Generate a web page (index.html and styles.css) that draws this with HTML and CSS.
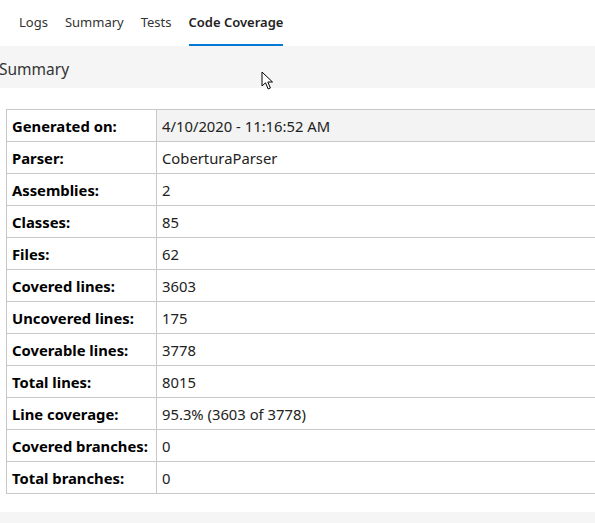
FILE: index.html
```html
<!DOCTYPE html>
<html lang="en">
<head>
  <meta charset="UTF-8">
  <meta name="viewport" content="width=device-width, initial-scale=1.0">
  <link rel="stylesheet" href="styles.css">
  <title>Code Coverage</title>
</head>
<body>

  <div class="tabs">
    <a class="tab">Logs</a>
    <a class="tab">Summary</a>
    <a class="tab">Tests</a>
    <a class="tab active">Code Coverage</a>
  </div>

  <div class="header">
    <h1>Summary</h1>
    <svg class="cursor" width="14" height="20" viewBox="0 0 14 20">
      <path d="M1 1 L1 15 L4.5 11.8 L7.2 18 L9.4 17 L6.8 11 L11.5 11 Z" fill="#fff" stroke="#000" stroke-width="1" stroke-linejoin="miter"/>
    </svg>
  </div>

  <div class="content">
    <table class="overview">
      <tr class="first"><th>Generated on:</th><td>4/10/2020 - 11:16:52 AM</td></tr>
      <tr><th>Parser:</th><td>CoberturaParser</td></tr>
      <tr><th>Assemblies:</th><td>2</td></tr>
      <tr><th>Classes:</th><td>85</td></tr>
      <tr><th>Files:</th><td>62</td></tr>
      <tr><th>Covered lines:</th><td>3603</td></tr>
      <tr><th>Uncovered lines:</th><td>175</td></tr>
      <tr><th>Coverable lines:</th><td>3778</td></tr>
      <tr><th>Total lines:</th><td>8015</td></tr>
      <tr><th>Line coverage:</th><td>95.3% (3603 of 3778)</td></tr>
      <tr><th>Covered branches:</th><td>0</td></tr>
      <tr><th>Total branches:</th><td>0</td></tr>
    </table>
  </div>

  <div class="footer"></div>

</body>
</html>
```

FILE: styles.css
```css
*{
  margin: 0;
  padding: 0;
  box-sizing: border-box;
}
body{
  width: 595px;
  height: 523px;
  overflow: hidden;
  background: #fff;
  font-family: "Noto Sans", "Open Sans", sans-serif;
  color: #222;
}
.tabs{
  display: flex;
  gap: 17px;
  height: 46px;
  padding-left: 19px;
}
.tab{
  font-size: 13px;
  color: #333;
  line-height: 44px;
  border-bottom: 2px solid transparent;
}
.tab.active{
  font-weight: 600;
  color: #222;
  border-bottom-color: #0078d4;
}
.header{
  position: relative;
  background: #f5f5f5;
  height: 42px;
}
.header h1{
  font-size: 15.5px;
  font-weight: normal;
  color: #333;
  line-height: 46px;
  margin-left: -1px;
}
.cursor{
  position: absolute;
  left: 261px;
  top: 25px;
}
.content{
  padding: 21px 0 0 6px;
  height: 424px;
}
.overview{
  border-collapse: collapse;
  width: 600px;
  font-size: 14.8px;
}
.overview th, .overview td{
  border: 1px solid #c8c8c8;
  height: 32px;
  padding: 0 5px;
  text-align: left;
  white-space: nowrap;
}
.overview th{
  width: 150px;
  font-weight: bold;
  color: #000;
}
.overview td{
  color: #222;
}
.overview .first td{
  background: #f3f3f3;
}
.footer{
  background: #f5f5f5;
  height: 11px;
}
```
